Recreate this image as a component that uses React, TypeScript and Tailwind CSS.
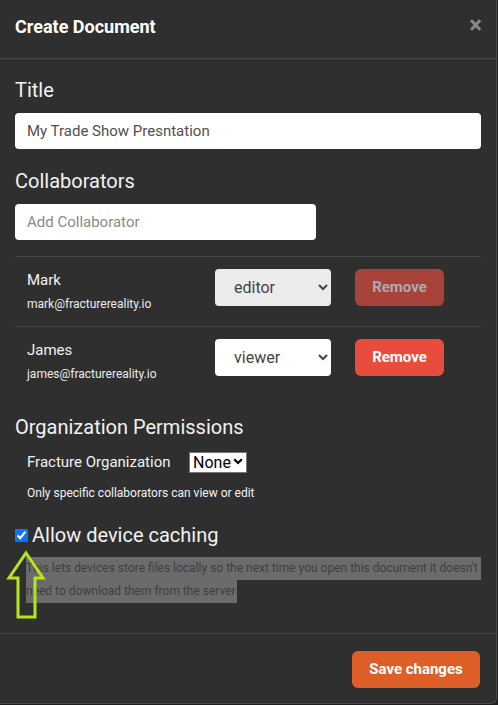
import React from "react";

type Collaborator = { name: string; email: string; role: string; locked?: boolean };

const collaborators: Collaborator[] = [
  { name: "Mark", email: "mark@fracturereality.io", role: "editor", locked: true },
  { name: "James", email: "james@fracturereality.io", role: "viewer" },
];

function CollaboratorRow({ c }: { c: Collaborator }) {
  return (
    <div className="flex h-[70px] items-start border-t border-[#454545] pt-[12px]">
      <div className="w-[200px] pl-[12px] pt-[2px]">
        <p className="text-[15px] leading-[18px] text-[#f2f2f2]">{c.name}</p>
        <p className="mt-[7px] text-[12px] leading-[16px] text-[#ececec]">{c.email}</p>
      </div>
      <select
        defaultValue={c.role}
        disabled={c.locked}
        className={
          "h-[37px] w-[116px] rounded-[4px] pl-[15px] pr-[8px] text-[16px] text-[#444] " +
          (c.locked ? "bg-[#ebebeb]" : "bg-white")
        }
      >
        <option value="editor">editor</option>
        <option value="viewer">viewer</option>
      </select>
      <button
        className={
          "ml-[24px] h-[37px] w-[89px] rounded-[6px] text-[15px] font-bold " +
          (c.locked ? "bg-[#a7433a] text-[#ababab]" : "bg-[#e74c3c] text-white")
        }
      >
        Remove
      </button>
    </div>
  );
}

export default function App() {
  return (
    <div className="h-[705px] w-[498px] bg-[#1e1e1e] font-['Roboto',sans-serif]">
      <div className="relative h-[704px] w-[497px] rounded-br-[6px] border-r border-b border-[#4a4a4a] bg-[#2f2f2f] text-[#f2f2f2]">
        {/* Header */}
        <div className="flex h-[59px] items-start justify-between border-b border-[#474747] pl-[15px] pr-[14px]">
          <h1 className="mt-[16px] text-[18px] leading-[22px] font-bold text-white">Create Document</h1>
          <span className="mt-[12px] text-[24px] leading-[26px] font-bold text-[#8a8a8a]">×</span>
        </div>

        {/* Body */}
        <div className="px-[15px]">
          <h2 className="mt-[19px] text-[20px] leading-[24px]">Title</h2>
          <input
            defaultValue="My Trade Show Presntation"
            className="mt-[11px] h-[36px] w-full rounded-[4px] bg-white px-[12px] text-[15px] text-[#505050] outline-none"
          />

          <h2 className="mt-[20px] text-[20px] leading-[24px]">Collaborators</h2>
          <input
            placeholder="Add Collaborator"
            className="mt-[11px] h-[36px] w-[301px] rounded-[4px] bg-white px-[12px] text-[15px] text-[#505050] placeholder:text-[#8a8a8a] outline-none"
          />

          <div className="mt-[16px]">
            {collaborators.map((c) => (
              <CollaboratorRow key={c.email} c={c} />
            ))}
          </div>

          <h2 className="mt-[19px] text-[20px] leading-[24px]">Organization Permissions</h2>
          <div className="mt-[12px] flex items-center pl-[12px]">
            <span className="w-[162px] text-[15px] leading-[20px]">Fracture Organization</span>
            <div className="relative h-[21px] w-[58px]">
              <select
                defaultValue="none"
                className="h-[21px] w-[58px] appearance-none border border-[#767676] bg-white pl-[3px] text-[16px] leading-[19px] text-black"
              >
                <option value="none">None</option>
                <option value="view">View</option>
                <option value="edit">Edit</option>
              </select>
              <svg
                className="pointer-events-none absolute right-[4px] top-[7px]"
                width="10"
                height="7"
                viewBox="0 0 10 7"
              >
                <path d="M1.2 1.2 L5 5 L8.8 1.2" fill="none" stroke="#000" strokeWidth="2.2" />
              </svg>
            </div>
          </div>
          <p className="mt-[13px] pl-[12px] text-[12px] leading-[16px]">
            Only specific collaborators can view or edit
          </p>

          <label className="mt-[22px] flex items-center gap-[4px]">
            <input type="checkbox" defaultChecked className="m-0 h-[13px] w-[13px] accent-[#0b75ff]" />
            <span className="text-[20px] leading-[24px]">Allow device caching</span>
          </label>
          <p className="mt-[10px] ml-[11px] text-[12px] leading-[23px] text-[#3f3f3f]">
            <span className="block bg-[#6b6b6b]">
              This lets devices store files locally so the next time you open this document it doesn't
            </span>
            <span className="inline-block bg-[#6b6b6b] pr-[1px]">need to download them from the server</span>
          </p>
        </div>

        {/* Footer */}
        <div className="mt-[30px] flex justify-end border-t border-[#474747] px-[16px] pt-[17px]">
          <button className="h-[37px] w-[128px] rounded-[6px] bg-[#dd5e26] text-[15px] font-bold text-white">
            Save changes
          </button>
        </div>

        {/* annotation arrow */}
        <svg className="absolute left-0 top-[545px]" width="50" height="80" viewBox="0 545 50 80">
          <polygon
            points="26,553 43,578 35,578 35,617 18,617 18,578 9,578"
            fill="none"
            stroke="#b5e61d"
            strokeWidth="3"
            strokeLinejoin="miter"
          />
        </svg>
      </div>
    </div>
  );
}
